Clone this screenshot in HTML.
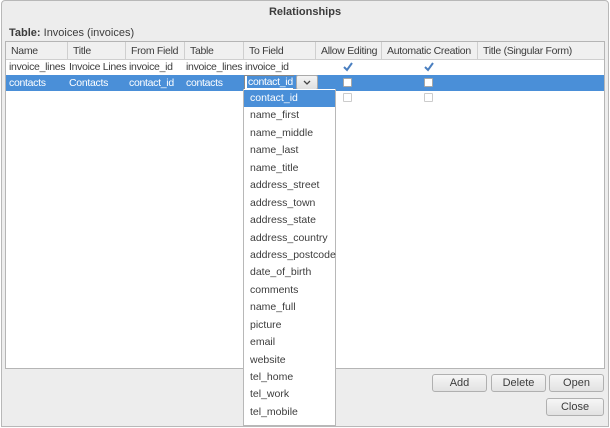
<!DOCTYPE html>
<html><head><meta charset="utf-8"><style>
*{margin:0;padding:0;box-sizing:border-box}
body{width:610px;height:428px;background:#fff;font-family:"Liberation Sans",sans-serif;font-size:11px;color:#3c3c3c;position:relative;overflow:hidden}
.win{position:absolute;left:1px;top:0;width:608px;height:427px;background:#ededed;border:1px solid #b8b8b8;border-radius:4px 4px 0 0}
.title{position:absolute;left:0;top:0;width:100%;height:22px;text-align:center;font-weight:bold;line-height:22px;font-size:11px;color:#3c3c3c}
.lbl{position:absolute;left:9px;top:27px;font-size:11px}
.tbl{position:absolute;left:5px;top:41px;width:600px;height:328px;background:#fff;border:1px solid #b5b5b5;letter-spacing:-0.3px}
.hdr{position:absolute;top:0;height:18px;line-height:18px;padding-left:5px;background:#f0f0f0;border-right:1px solid #cfcfcf;border-bottom:1px solid #cfcfcf;white-space:nowrap;overflow:hidden;font-size:10.5px}
.c{position:absolute;white-space:nowrap;line-height:16px;font-size:10.5px;padding-left:3px}
.sel{position:absolute;left:0;top:33px;width:598px;height:16px;background:#4a8fd8}
.w{color:#fff}
.cb{position:absolute;width:9px;height:9px;border:1px solid #a8a8a8;background:#fff;border-radius:1px}
.dd{position:absolute;left:243px;top:89px;width:93px;height:337px;background:#fff;border:1px solid #b8b8b8;border-top:none;padding-top:1px}
.it{height:17.45px;line-height:17.45px;padding-left:6px;font-size:10.5px;color:#3c3c3c}
.it.h{background:#4a8fd8;color:#fff}
.btn{position:absolute;height:18px;border:1px solid #b0b0b0;border-radius:3px;background:linear-gradient(#f6f6f6,#e2e2e2);text-align:center;line-height:16px;font-size:11px;color:#3c3c3c}
</style></head><body>
<div class="win">
<div class="title">Relationships</div>
</div>
<div class="lbl"><b>Table:</b> Invoices (invoices)</div>
<div class="tbl">
 <div class="hdr" style="left:0;width:62px">Name</div>
 <div class="hdr" style="left:62px;width:58px">Title</div>
 <div class="hdr" style="left:120px;width:59px">From Field</div>
 <div class="hdr" style="left:179px;width:59px">Table</div>
 <div class="hdr" style="left:238px;width:72px">To Field</div>
 <div class="hdr" style="left:310px;width:66px">Allow Editing</div>
 <div class="hdr" style="left:376px;width:96px">Automatic Creation</div>
 <div class="hdr" style="left:472px;width:126px;border-right:none">Title (Singular Form)</div>
 <div class="c" style="left:0;top:17px">invoice_lines</div>
 <div class="c" style="left:60px;top:17px">Invoice Lines</div>
 <div class="c" style="left:120px;top:17px">invoice_id</div>
 <div class="c" style="left:177px;top:17px">invoice_lines</div>
 <div class="c" style="left:236px;top:17px">invoice_id</div>
 <svg style="position:absolute;left:337px;top:20px" width="10" height="10"><path d="M1 5 L4 8 L9 1" stroke="#4a7fc0" stroke-width="2" fill="none"/></svg>
 <svg style="position:absolute;left:418px;top:20px" width="10" height="10"><path d="M1 5 L4 8 L9 1" stroke="#4a7fc0" stroke-width="2" fill="none"/></svg>
 <div class="sel"></div>
 <div class="c w" style="left:0;top:33px">contacts</div>
 <div class="c w" style="left:60px;top:33px">Contacts</div>
 <div class="c w" style="left:120px;top:33px">contact_id</div>
 <div class="c w" style="left:177px;top:33px">contacts</div>
 <div style="position:absolute;left:238px;top:33px;width:50px;height:15px;background:#fff;border:1px solid #888"></div>
 <div class="c" style="left:238px;top:32px;color:#fff"><span style="background:#4a8fd8;padding:0 1px">contact_id</span></div>
 <div style="position:absolute;left:290px;top:33px;width:22px;height:15px;background:linear-gradient(#f4f4f4,#e0e0e0);border:1px solid #aaa;border-radius:2px"><svg width="20" height="13"><path d="M7 5 L10 8 L13 5" stroke="#444" stroke-width="1.3" fill="none"/></svg></div>
 <div class="cb" style="left:337px;top:36px"></div>
 <div class="cb" style="left:418px;top:36px"></div>
 <div class="cb" style="left:337px;top:51px;border-color:#ccc"></div>
 <div class="cb" style="left:418px;top:51px;border-color:#ccc"></div>
</div>
<div class="dd">
<div class="it h">contact_id</div><div class="it">name_first</div><div class="it">name_middle</div><div class="it">name_last</div><div class="it">name_title</div><div class="it">address_street</div><div class="it">address_town</div><div class="it">address_state</div><div class="it">address_country</div><div class="it">address_postcode</div><div class="it">date_of_birth</div><div class="it">comments</div><div class="it">name_full</div><div class="it">picture</div><div class="it">email</div><div class="it">website</div><div class="it">tel_home</div><div class="it">tel_work</div><div class="it">tel_mobile</div>
</div>
<div class="btn" style="left:432px;top:374px;width:55px">Add</div>
<div class="btn" style="left:491px;top:374px;width:55px">Delete</div>
<div class="btn" style="left:549px;top:374px;width:55px">Open</div>
<div class="btn" style="left:546px;top:398px;width:58px">Close</div>
</body></html>
